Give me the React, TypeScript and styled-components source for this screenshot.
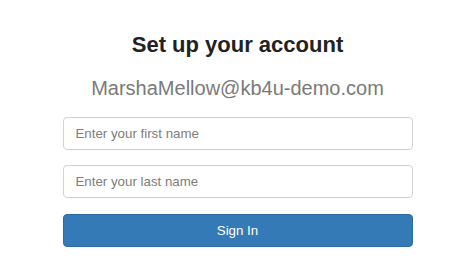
import React from 'react';
import styled, { createGlobalStyle } from 'styled-components';

const GlobalStyle = createGlobalStyle`
	html, body {
		margin: 0;
		padding: 0;
		background: #ffffff;
	}
	body {
		font-family: 'Liberation Sans', Arial, sans-serif;
	}
`;

const Page = styled.div`
	display: flex;
	flex-direction: column;
	align-items: center;
	padding-top: 32px;
	padding-left: 1px;
`;

const Title = styled.h1`
	margin: 0;
	font-size: 22px;
	line-height: 26px;
	font-weight: 700;
	color: #222222;
`;

const Email = styled.div`
	margin-top: 18px;
	font-size: 20px;
	line-height: 24px;
	color: #7a7a7a;
`;

const Form = styled.form`
	display: flex;
	flex-direction: column;
	gap: 15px;
	width: 350px;
	margin-top: 17px;
`;

const Input = styled.input`
	box-sizing: border-box;
	height: 33px;
	width: 100%;
	padding: 0 12px;
	border: 1px solid #d2d2d2;
	border-radius: 4px;
	font-family: 'Liberation Sans', Arial, sans-serif;
	font-size: 13.3px;
	color: #555555;
	outline: none;
	&::placeholder {
		color: #7d7d7d;
	}
`;

const Button = styled.button`
	box-sizing: border-box;
	height: 33px;
	width: 100%;
	margin-top: 1px;
	border: 1px solid #2e6da4;
	border-radius: 4px;
	background: #337ab7;
	color: #ffffff;
	font-family: 'Liberation Sans', Arial, sans-serif;
	font-size: 13.3px;
	cursor: pointer;
`;

export default function App() {
	return (
		<>
			<GlobalStyle />
			<Page>
				<Title>Set up your account</Title>
				<Email>MarshaMellow@kb4u-demo.com</Email>
				<Form onSubmit={e => e.preventDefault()}>
					<Input type="text" placeholder="Enter your first name" />
					<Input type="text" placeholder="Enter your last name" />
					<Button type="submit">Sign In</Button>
				</Form>
			</Page>
		</>
	);
}
